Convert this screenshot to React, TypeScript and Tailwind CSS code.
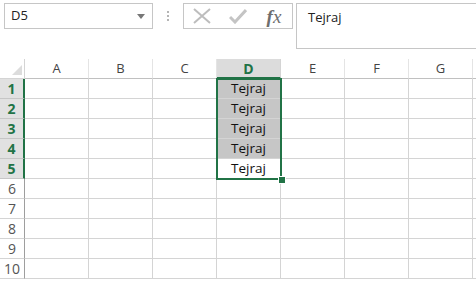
import React from "react";

const cols = ["A", "B", "C", "D", "E", "F", "G"];
const rows = [1, 2, 3, 4, 5, 6, 7, 8, 9, 10];

export default function App() {
  return (
    <div className="w-[476px] h-[283px] overflow-hidden bg-white relative" style={{ fontFamily: '"Open Sans", "Liberation Sans", sans-serif' }}>
      {/* top bar */}
      <div className="h-[59px] flex items-start pt-[3px] pl-[4px]">
        <div className="w-[149px] h-[26px] border border-[#c6c6c6] flex items-center justify-between pl-[6px] pr-[7px] text-[13px] text-[#222]">
          <span>D5</span>
          <svg width="8" height="5" viewBox="0 0 8 5"><path d="M0 0 L8 0 L4 5 Z" fill="#777" /></svg>
        </div>
        <div className="w-[30px] h-[26px] flex flex-col items-center justify-center gap-[2px]">
          <div className="w-[2px] h-[2px] bg-[#b5b5b5]" />
          <div className="w-[2px] h-[2px] bg-[#b5b5b5]" />
          <div className="w-[2px] h-[2px] bg-[#b5b5b5]" />
        </div>
        <div className="w-[110px] h-[26px] border border-[#c6c6c6] flex items-center">
          <div className="w-[36px] flex justify-center">
            <svg width="18" height="16" viewBox="0 0 18 16"><path d="M1 1 L17 15 M17 1 L1 15" stroke="#bdbdbd" strokeWidth="2" /></svg>
          </div>
          <div className="w-[36px] flex justify-center">
            <svg width="18" height="16" viewBox="0 0 18 16"><path d="M1 9 L6 14 L17 2" stroke="#c4c4c4" strokeWidth="3" fill="none" /></svg>
          </div>
          <div className="w-[36px] flex justify-center text-[#6e6e6e] italic text-[19px] leading-none" style={{ fontFamily: '"Liberation Serif", serif' }}>
            <span className="font-bold">f</span><span>x</span>
          </div>
        </div>
        <div className="ml-[3px] flex-1 h-[46px] border border-[#c6c6c6] border-r-0 pl-[11px] pt-[4px] text-[13px] text-[#222]">
          Tejraj
        </div>
      </div>

      {/* header row */}
      <div className="flex h-[20px]">
        <div className="w-[25px] h-full border-b border-r border-[#d4d4d4] relative">
          <svg className="absolute right-[2px] bottom-[3px]" width="10" height="10" viewBox="0 0 10 10"><path d="M10 0 L10 10 L0 10 Z" fill="#dcdcdc" /></svg>
        </div>
        {cols.map((c) => (
          <div
            key={c}
            className={
              c === "D"
                ? "w-[64px] h-full border-b-2 border-r border-b-[#217346] border-r-[#d4d4d4] bg-[#dcdcdc] flex items-center justify-center text-[14px] font-bold text-[#217346]"
                : "w-[64px] h-full border-b border-r border-b-[#c0c0c0] border-r-[#e4e4e4] flex items-center justify-center text-[13px] text-[#444]"
            }
          >
            {c}
          </div>
        ))}
        <div className="flex-1 h-full border-b border-[#c0c0c0]" />
      </div>

      {/* rows */}
      {rows.map((r) => (
        <div key={r} className="flex h-[20px]">
          <div
            className={
              r <= 5
                ? "w-[25px] h-full border-b border-b-[#c6c6c6] border-r-2 border-r-[#217346] bg-[#e1e1e1] flex items-center justify-center text-[14px] font-bold text-[#217346]"
                : "w-[25px] h-full border-b border-r border-b-[#d4d4d4] border-r-[#9e9e9e] flex items-center justify-center text-[14px] text-[#555]"
            }
          >
            {r}
          </div>
          {cols.map((c) => (
            <div
              key={c}
              className={
                c === "D" && r <= 4
                  ? "w-[64px] h-full border-b border-r border-[#d4d4d4] bg-[#c6c6c6] flex items-center justify-center text-[13.5px] text-[#111]"
                  : "w-[64px] h-full border-b border-r border-[#d4d4d4] flex items-center justify-center text-[13.5px] text-[#111]"
              }
            >
              {c === "D" && r <= 5 ? "Tejraj" : ""}
            </div>
          ))}
          <div className="flex-1 h-full border-b border-[#d4d4d4]" />
        </div>
      ))}

      {/* selection */}
      <div className="absolute left-[216px] top-[78px] w-[66px] h-[102px] border-2 border-[#217346]" />
      <div className="absolute left-[278px] top-[176px] w-[6px] h-[6px] bg-[#217346] border border-white box-content" />
    </div>
  );
}
